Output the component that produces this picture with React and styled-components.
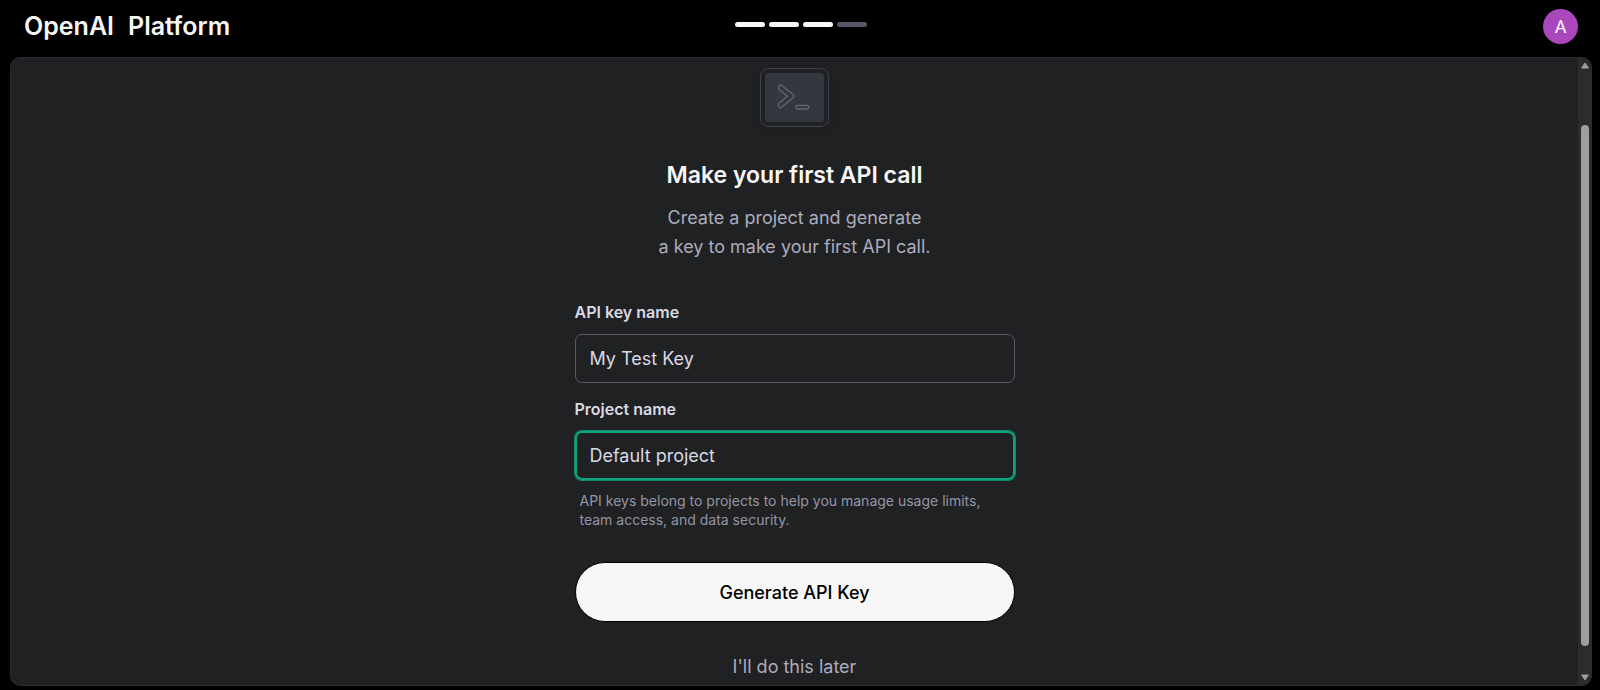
import React, { useState } from "react";
import styled, { createGlobalStyle } from "styled-components";

const STEPS = 4;

const App = () => {
  const [keyName, setKeyName] = useState("My Test Key");
  const [projectName, setProjectName] = useState("Default project");
  return (
    <>
      <GlobalStyle />
      <Page>
        <Header current={3} />
        <Panel>
          <Content>
            <TerminalBadge />
            <Title>Make your first API call</Title>
            <Intro>
              Create a project and generate
              <br />a key to make your first API call.
            </Intro>
            <Form onSubmit={(e) => e.preventDefault()}>
              <Field>
                <Label htmlFor="key_name">API key name</Label>
                <Input
                  id="key_name"
                  type="text"
                  value={keyName}
                  onChange={(e) => setKeyName(e.target.value)}
                />
              </Field>
              <Field>
                <Label htmlFor="project_name">Project name</Label>
                <Input
                  id="project_name"
                  type="text"
                  $active
                  aria-describedby="project_help"
                  value={projectName}
                  onChange={(e) => setProjectName(e.target.value)}
                />
              </Field>
              <HelpText id="project_help">
                API keys belong to projects to help you manage usage limits,
                <br />
                team access, and data security.
              </HelpText>
              <SubmitBtn type="submit">Generate API Key</SubmitBtn>
              <LaterBtn type="button">I'll do this later</LaterBtn>
            </Form>
          </Content>
          <ScrollBar />
        </Panel>
      </Page>
    </>
  );
};

const Header = ({ current }) => {
  return (
    <HeaderWrap>
      <Brand>
        <span>OpenAI</span>
        <span>Platform</span>
      </Brand>
      <Steps>
        {Array.from({ length: STEPS }, (_, i) => (
          <Step key={i} $done={i < current} />
        ))}
      </Steps>
      <Avatar type="button">A</Avatar>
    </HeaderWrap>
  );
};

const TerminalBadge = () => {
  return (
    <BadgeFrame>
      <BadgeScreen>
        <svg width="59" height="49" viewBox="0 0 59 49" fill="none" aria-hidden="true">
          <g stroke="#646576" strokeWidth="1.3" strokeLinejoin="round">
            <path d="M16.5 12.4 28.2 21.6a2 2 0 0 1 0 3.1L16.5 34.2a1.9 1.9 0 0 1-3-1.5V31.4c0-.6.3-1.1.8-1.5L22.4 23.2 14.3 16.8c-.5-.4-.8-.9-.8-1.5v-1.4a1.9 1.9 0 0 1 3-1.5Z" />
            <rect x="30.6" y="32.4" width="13" height="3.6" rx="1.8" />
          </g>
        </svg>
      </BadgeScreen>
    </BadgeFrame>
  );
};

const ScrollBar = () => {
  return (
    <ScrollTrack aria-hidden="true">
      <svg width="8" height="7" viewBox="0 0 8 7">
        <path d="M4 1 7.4 6H.6Z" fill="#9f9f9f" stroke="#9f9f9f" strokeLinejoin="round" />
      </svg>
      <ScrollLane>
        <ScrollThumb />
      </ScrollLane>
      <svg width="8" height="7" viewBox="0 0 8 7">
        <path d="M4 6 .6 1H7.4Z" fill="#9f9f9f" stroke="#9f9f9f" strokeLinejoin="round" />
      </svg>
    </ScrollTrack>
  );
};

const GlobalStyle = createGlobalStyle`
  *, *::before, *::after {
    box-sizing: border-box;
  }
  body {
    margin: 0;
    background: #000;
    color: #d9d9e3;
    font-family: Inter, "Liberation Sans", sans-serif;
    -webkit-font-smoothing: antialiased;
  }
  button, input {
    font-family: inherit;
  }
  h1, p {
    margin: 0;
  }
`;

const Page = styled.div`
  display: flex;
  flex-direction: column;
  min-height: 100vh;
  padding: 0 8px 4px 10px;
`;

const HeaderWrap = styled.header`
  display: grid;
  grid-template-columns: 1fr auto 1fr;
  align-items: start;
  padding: 9px 14px 13px 14px;
`;
const Brand = styled.div`
  display: flex;
  gap: 14px;
  color: #f7f7f8;
  font-size: 25px;
  font-weight: 600;
  line-height: 34px;
`;
const Steps = styled.div`
  display: flex;
  gap: 4px;
  padding-top: 13px;
`;
const Step = styled.span`
  width: 30px;
  height: 5px;
  border-radius: 3px;
  background: ${({ $done }) => ($done ? "#f7f7f8" : "#565869")};
`;
const Avatar = styled.button`
  justify-self: end;
  width: 35px;
  height: 35px;
  padding: 0;
  border: 0;
  border-radius: 50%;
  background: #ab47bc;
  color: #fff;
  font-family: Roboto, sans-serif;
  font-size: 18px;
`;

const Panel = styled.main`
  flex: 1;
  display: flex;
  border: 1px solid #2a2b32;
  border-radius: 10px;
  background: #202123;
  overflow: hidden;
`;
const Content = styled.section`
  flex: 1;
  display: flex;
  flex-direction: column;
  align-items: center;
  padding-top: 10px;
`;

const BadgeFrame = styled.div`
  padding: 4px;
  border: 1px solid #40414f;
  border-radius: 8px;
  box-shadow: 0 4px 10px rgba(0, 0, 0, 0.08);
`;
const BadgeScreen = styled.div`
  display: flex;
  border-radius: 3px;
  background: #353740;
`;

const Title = styled.h1`
  margin-top: 30px;
  color: #f7f7f8;
  font-size: 23px;
  font-weight: 600;
  line-height: 36px;
`;
const Intro = styled.p`
  margin-top: 10px;
  color: #acacbe;
  font-size: 18px;
  line-height: 29px;
  text-align: center;
`;

const Form = styled.form`
  display: flex;
  flex-direction: column;
  width: 100%;
  max-width: 440px;
  margin-top: 39px;
`;
const Field = styled.div`
  display: flex;
  flex-direction: column;
  gap: 10px;

  & + & {
    margin-top: 14px;
  }
`;
const Label = styled.label`
  font-size: 16px;
  font-weight: 600;
  line-height: 24px;
`;
const Input = styled.input`
  width: 100%;
  height: 49px;
  padding: 0 ${({ $active }) => ($active ? "13px" : "14px")};
  border: ${({ $active }) => ($active ? "2px solid #10a37f" : "1px solid #565869")};
  border-radius: 7px;
  outline: none;
  background: transparent;
  box-shadow: ${({ $active }) => ($active ? "0 0 0 1px #0f8a6d" : "none")};
  color: #d9d9e3;
  font-size: 18px;
`;
const HelpText = styled.p`
  margin-top: 11px;
  padding-left: 5px;
  color: #9595a6;
  font-size: 14px;
  line-height: 19px;
`;
const SubmitBtn = styled.button`
  height: 60px;
  margin-top: 33px;
  border: 1px solid #000;
  border-radius: 30px;
  background: #f7f7f8;
  color: #000;
  font-size: 18px;
  font-weight: 500;
`;
const LaterBtn = styled.button`
  align-self: center;
  margin-top: 30px;
  padding: 0;
  border: 0;
  background: none;
  color: #acacbe;
  font-size: 18px;
  line-height: 29px;
`;

const ScrollTrack = styled.div`
  display: flex;
  flex-direction: column;
  align-items: center;
  width: 13px;
  padding: 4px 0;
  background: #2c2c2c;
`;
const ScrollLane = styled.div`
  flex: 1;
  display: flex;
  padding: 56px 0 28px;
`;
const ScrollThumb = styled.div`
  width: 8px;
  border-radius: 4px;
  background: #9f9f9f;
`;

export default App;
